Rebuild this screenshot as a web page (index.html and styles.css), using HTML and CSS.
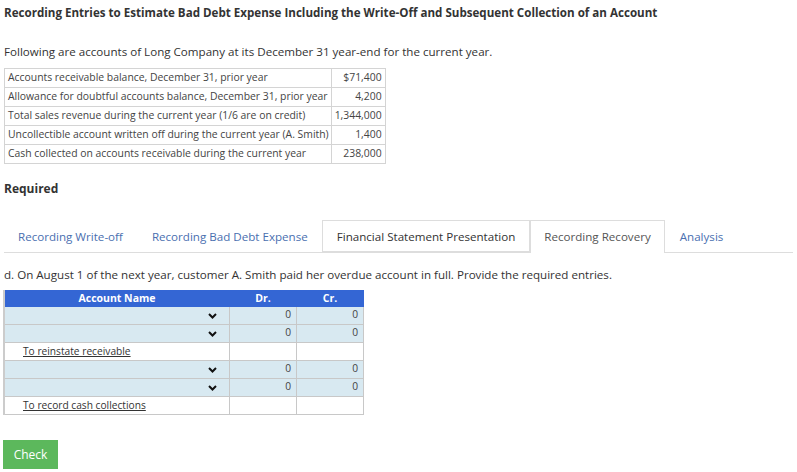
FILE: index.html
```html
<!DOCTYPE html>
<html>
<head>
<meta charset="utf-8">
<title>Recording Entries to Estimate Bad Debt Expense</title>
<link rel="stylesheet" href="styles.css">
</head>
<body>
<h2 class="title">Recording Entries to Estimate Bad Debt Expense Including the Write-Off and Subsequent Collection of an Account</h2>

<p class="intro">Following are accounts of Long Company at its December 31 year-end for the current year.</p>

<table class="facts">
  <tr><td>Accounts receivable balance, December 31, prior year</td><td class="num">$71,400</td></tr>
  <tr><td>Allowance for doubtful accounts balance, December 31, prior year</td><td class="num">4,200</td></tr>
  <tr><td>Total sales revenue during the current year (1/6 are on credit)</td><td class="num">1,344,000</td></tr>
  <tr><td>Uncollectible account written off during the current year (A. Smith)</td><td class="num">1,400</td></tr>
  <tr><td>Cash collected on accounts receivable during the current year</td><td class="num">238,000</td></tr>
</table>

<h3 class="required">Required</h3>

<ul class="tabs">
  <li class="tab link">Recording Write-off</li>
  <li class="tab link">Recording Bad Debt Expense</li>
  <li class="tab boxed">Financial Statement Presentation</li>
  <li class="tab active">Recording Recovery</li>
  <li class="tab link">Analysis</li>
</ul>

<p class="question">d. On August 1 of the next year, customer A. Smith paid her overdue account in full. Provide the required entries.</p>

<table class="journal">
  <tr><th class="acct">Account Name</th><th class="amt">Dr.</th><th class="amt">Cr.</th></tr>
  <tr class="entry"><td class="acct"><span class="chev"><svg width="9" height="6" viewBox="0 0 9 6"><path d="M1 1 L4.5 4.5 L8 1" fill="none" stroke="#111" stroke-width="2"/></svg></span></td><td class="amt">0</td><td class="amt">0</td></tr>
  <tr class="entry"><td class="acct"><span class="chev"><svg width="9" height="6" viewBox="0 0 9 6"><path d="M1 1 L4.5 4.5 L8 1" fill="none" stroke="#111" stroke-width="2"/></svg></span></td><td class="amt">0</td><td class="amt">0</td></tr>
  <tr class="memo"><td class="acct"><a href="#">To reinstate receivable</a></td><td></td><td></td></tr>
  <tr class="entry"><td class="acct"><span class="chev"><svg width="9" height="6" viewBox="0 0 9 6"><path d="M1 1 L4.5 4.5 L8 1" fill="none" stroke="#111" stroke-width="2"/></svg></span></td><td class="amt">0</td><td class="amt">0</td></tr>
  <tr class="entry"><td class="acct"><span class="chev"><svg width="9" height="6" viewBox="0 0 9 6"><path d="M1 1 L4.5 4.5 L8 1" fill="none" stroke="#111" stroke-width="2"/></svg></span></td><td class="amt">0</td><td class="amt">0</td></tr>
  <tr class="memo"><td class="acct"><a href="#">To record cash collections</a></td><td></td><td></td></tr>
</table>

<button class="check">Check</button>
</body>
</html>
```

FILE: styles.css
```css
body {
  margin: 0;
  padding: 0 4px;
  font-family: "Open Sans", "Liberation Sans", sans-serif;
  color: #333;
  background-color: white;
}

.title {
  font-size: 11.6px;
  font-weight: bold;
  margin: 4px 0 0;
  line-height: 18px;
  color: #333;
}

.intro {
  font-size: 11.6px;
  margin: 21px 0 0;
  line-height: 18px;
}

.facts {
  margin-top: 7px;
  border-collapse: collapse;
  font-size: 10.4px;
}

.facts td {
  border: 1px solid #d4d4d4;
  padding: 2px 2px 3px 3px;
  line-height: 13px;
  color: #444;
}

.facts td.num {
  text-align: right;
  padding-left: 3px;
  padding-right: 3px;
}

.required {
  font-size: 12px;
  font-weight: bold;
  margin: 17px 0 0;
  line-height: 16px;
}

.tabs {
  list-style: none;
  margin: 23px 0 0;
  padding: 0;
  display: flex;
  border-bottom: 1px solid #ddd;
  font-size: 11.6px;
}

.tab {
  padding: 0 13.5px;
  height: 31px;
  line-height: 32px;
  border: 1px solid transparent;
  border-bottom: none;
  margin-bottom: -1px;
}

.tab:first-child {
  padding-left: 13px;
}

.tab.link {
  color: #4a6fb0;
}

.tab.boxed {
  border-color: #ddd;
  border-bottom: 1px solid #ddd;
  height: 30px;
  color: #333;
}

.tab.active {
  border-color: #ddd;
  background: white;
  height: 32px;
  color: #555;
}

.question {
  font-size: 11.6px;
  margin: 13px 0 0;
  line-height: 18px;
}

.journal {
  margin-top: 6px;
  margin-left: -1px;
  border-collapse: collapse;
  font-size: 10.2px;
  border-left: 2px solid #ccc;
}

.journal th {
  background: #3466d4;
  color: white;
  font-weight: bold;
  font-size: 10.5px;
  line-height: 15px;
  padding: 0;
  border: 1px solid #3466d4;
}

.journal th.acct {
  width: 224px;
}

.journal th.amt {
  width: 66px;
}

.journal td {
  border: 1px solid #c8c8c8;
  padding: 0 5px;
  line-height: 17px;
}

.journal tr.entry td {
  background: #d8e9f1;
}

.journal td.amt {
  text-align: right;
  vertical-align: top;
  line-height: 15px;
  padding-bottom: 2px;
  color: #444;
}

.journal td.acct {
  text-align: right;
}

.chev {
  display: inline-block;
  margin-right: 7px;
  vertical-align: middle;
}

.chev svg {
  display: block;
}

.journal tr.memo td.acct {
  text-align: left;
  padding-left: 18px;
}

.journal a {
  color: #333;
}

.check {
  margin-top: 25px;
  margin-left: -1px;
  display: block;
  background: #5cb85c;
  border: none;
  color: white;
  font-family: "Open Sans", "Liberation Sans", sans-serif;
  font-size: 12px;
  width: 55px;
  height: 29px;
  padding: 0;
}
```
